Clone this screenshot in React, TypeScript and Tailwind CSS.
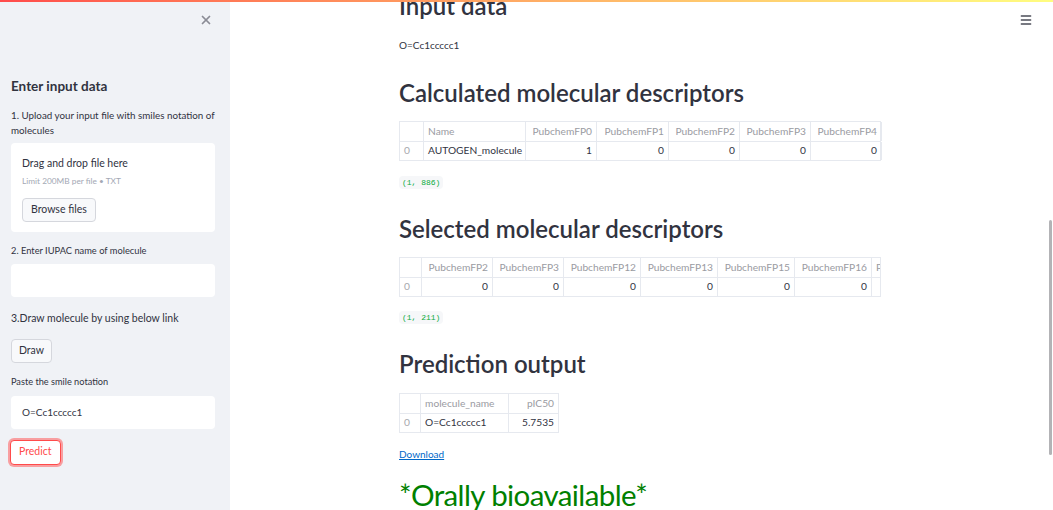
import { X, Menu } from 'lucide-react';

const font = { fontFamily: 'Lato, "Noto Sans", sans-serif' };

function Th({ children, w, right }: { children?: React.ReactNode; w: string; right?: boolean }) {
  return (
    <div className={`${w} shrink-0 h-[19px] px-[4px] flex items-center border-r border-[#e6e9ef] text-[#9a9ba2] whitespace-nowrap ${right ? 'justify-end' : ''}`}>
      {children}
    </div>
  );
}

function Td({ children, w, right, muted }: { children?: React.ReactNode; w: string; right?: boolean; muted?: boolean }) {
  return (
    <div className={`${w} shrink-0 h-[18px] px-[4px] flex items-center border-r border-[#e6e9ef] whitespace-nowrap ${muted ? 'text-[#a6a7ad]' : 'text-[#31333f]'} ${right ? 'justify-end' : ''}`}>
      {children}
    </div>
  );
}

function Shape({ text, mt }: { text: string; mt: string }) {
  return (
    <div className={`${mt} h-[13px] w-fit rounded bg-[#f6f7f9] px-[3px] font-['Liberation_Mono',monospace] text-[8px] leading-[13px] text-[#09ab3b]`}>
      {text}
    </div>
  );
}

export default function App() {
  return (
    <div className="relative h-[510px] w-[1053px] overflow-hidden bg-white text-[#31333f]" style={font}>
      <div className="absolute left-0 top-0 z-10 h-[2px] w-full bg-gradient-to-r from-[#ff4b4b] to-[#fffd80]" />

      <div className="flex h-full">
        {/* Sidebar */}
        <aside className="h-full w-[230px] shrink-0 bg-[#f0f2f6] px-[11px]">
          <div className="flex justify-end pt-[13px] pr-[6px]">
            <X size={14} strokeWidth={3} className="text-[#8a8c95]" />
          </div>
          <h3 className="mt-[53px] text-[13.5px] font-bold leading-none">Enter input data</h3>
          <p className="mt-[14px] text-[9.8px] leading-[15px]">1. Upload your input file with smiles notation of molecules</p>
          <div className="mt-[5px] h-[89px] w-[204px] rounded bg-white px-[11px] pt-[13px]">
            <div className="text-[10.5px] leading-[14px]">Drag and drop file here</div>
            <div className="mt-[5px] text-[8.3px] leading-[12px] text-[#a3a8b4]">Limit 200MB per file • TXT</div>
            <button className="mt-[11px] h-[24px] rounded border border-[#d5d7dd] bg-[#f8f9fb] px-[8px] text-[10.5px]">Browse files</button>
          </div>
          <p className="mt-[12px] text-[9.3px] leading-[14px]">2. Enter IUPAC name of molecule</p>
          <div className="mt-[6px] h-[33px] w-[204px] rounded bg-white" />
          <p className="mt-[14px] text-[10.5px] leading-[14px]">3.Draw molecule by using below link</p>
          <button className="mt-[14px] h-[24px] rounded border border-[#d5d7dd] bg-[#f8f9fb] px-[7px] text-[10.5px]">Draw</button>
          <p className="mt-[12px] text-[9.2px] leading-[14px]">Paste the smile notation</p>
          <div className="mt-[7px] flex h-[33px] w-[204px] items-center rounded bg-white px-[11px] text-[10px]">O=Cc1ccccc1</div>
          <button className="ml-[-1px] mt-[11px] h-[25px] rounded border border-[#ff4b4b] bg-white px-[8px] text-[10.5px] text-[#ff4b4b] shadow-[0_0_0_2px_rgba(255,75,75,0.5)]">Predict</button>
        </aside>

        {/* Main */}
        <main className="relative h-full flex-1">
          <div className="absolute right-[20px] top-[13px]">
            <Menu size={14} strokeWidth={2.5} className="text-[#4b4d58]" />
          </div>
          <div className="absolute right-[1px] top-[220px] h-[235px] w-[3px] rounded bg-[#b3b3b6]" />

          <div className="mx-auto mt-[-10px] w-[485px]">
            <h2 className="text-[24px] font-semibold leading-[32px]">Input data</h2>
            <p className="mt-[15px] text-[10px] leading-[16px]">O=Cc1ccccc1</p>

            <h2 className="mt-[24px] text-[24px] font-semibold leading-[32px]">Calculated molecular descriptors</h2>
            <div className="mt-[12px] w-[482px] border border-[#e6e9ef] text-[10.2px]">
              <div className="flex border-b border-[#e6e9ef]">
                <Th w="w-[24px]" />
                <Th w="w-[102px]">Name</Th>
                <Th w="w-[71px]" right>PubchemFP0</Th>
                <Th w="w-[72px]" right>PubchemFP1</Th>
                <Th w="w-[71px]" right>PubchemFP2</Th>
                <Th w="w-[71px]" right>PubchemFP3</Th>
                <Th w="w-[71px]" right>PubchemFP4</Th>
              </div>
              <div className="flex">
                <Td w="w-[24px]" muted>0</Td>
                <Td w="w-[102px]">AUTOGEN_molecule</Td>
                <Td w="w-[71px]" right>1</Td>
                <Td w="w-[72px]" right>0</Td>
                <Td w="w-[71px]" right>0</Td>
                <Td w="w-[71px]" right>0</Td>
                <Td w="w-[71px]" right>0</Td>
              </div>
            </div>
            <Shape text="(1, 886)" mt="mt-[15px]" />

            <h2 className="mt-[24px] text-[24px] font-semibold leading-[32px]">Selected molecular descriptors</h2>
            <div className="mt-[12px] w-[482px] overflow-hidden border border-[#e6e9ef] text-[10.2px]">
              <div className="flex border-b border-[#e6e9ef]">
                <Th w="w-[22px]" />
                <Th w="w-[71px]" right>PubchemFP2</Th>
                <Th w="w-[71px]" right>PubchemFP3</Th>
                <Th w="w-[77px]" right>PubchemFP12</Th>
                <Th w="w-[77px]" right>PubchemFP13</Th>
                <Th w="w-[77px]" right>PubchemFP15</Th>
                <Th w="w-[77px]" right>PubchemFP16</Th>
                <Th w="w-[77px]">PubchemFP17</Th>
              </div>
              <div className="flex">
                <Td w="w-[22px]" muted>0</Td>
                <Td w="w-[71px]" right>0</Td>
                <Td w="w-[71px]" right>0</Td>
                <Td w="w-[77px]" right>0</Td>
                <Td w="w-[77px]" right>0</Td>
                <Td w="w-[77px]" right>0</Td>
                <Td w="w-[77px]" right>0</Td>
                <Td w="w-[77px]" right>0</Td>
              </div>
            </div>
            <Shape text="(1, 211)" mt="mt-[14px]" />

            <h2 className="mt-[24px] text-[24px] font-semibold leading-[32px]">Prediction output</h2>
            <div className="mt-[13px] w-fit border border-[#e6e9ef] text-[10.2px]">
              <div className="flex border-b border-[#e6e9ef]">
                <Th w="w-[21px]" />
                <Th w="w-[88px]">molecule_name</Th>
                <div className="flex h-[19px] w-[49px] items-center justify-end px-[4px] text-[#9a9ba2]">pIC50</div>
              </div>
              <div className="flex">
                <Td w="w-[21px]" muted>0</Td>
                <Td w="w-[88px]">O=Cc1ccccc1</Td>
                <div className="flex h-[18px] w-[49px] items-center justify-end px-[4px]">5.7535</div>
              </div>
            </div>
            <div className="mt-[11px] leading-[16px]">
              <a href="#" className="text-[10px] text-[#0068c9] underline">Download</a>
            </div>
            <div className="mt-[14px] text-[29.5px] leading-[38px] tracking-[-0.6px] text-[#008000]">*Orally bioavailable*</div>
          </div>
        </main>
      </div>
    </div>
  );
}
